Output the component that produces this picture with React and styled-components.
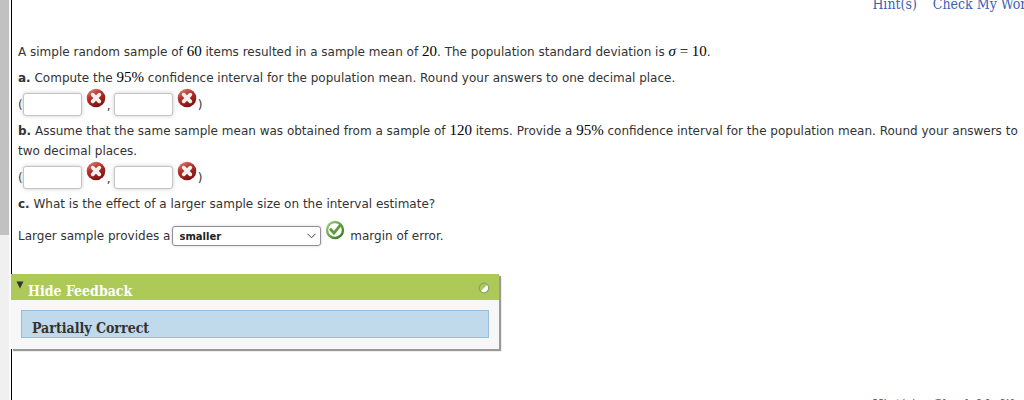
import React, { useState } from 'react'
import styled, { createGlobalStyle } from 'styled-components'

const GlobalStyle = createGlobalStyle`
  * {
    box-sizing: border-box;
  }

  body {
    margin: 0;
    overflow: hidden;
    background-color: #fff;
    color: #333;
    font-family: 'DejaVu Sans', Verdana, sans-serif;
    font-size: 12px;
    line-height: 20px;
  }
`;

const Page = styled.div`
  display: flex;
  height: 100vh;
  overflow: hidden;
`;

const Track = styled.div`
  flex: none;
  width: 11px;
  background-color: #f0f0f0;
  border-right: 2px solid #fafafa;
`;

const Thumb = styled.div`
  height: 235px;
  background-color: #c1c1c1;
`;

const Content = styled.main`
  flex: 1;
  min-width: 0;
  border-left: 1px solid #000;
`;

const Links = styled.nav`
  display: flex;
  justify-content: flex-end;
  gap: 16px;
  height: 24px;
  margin-top: ${props => (props.$top ? '-8px' : '44px')};
  margin-right: -10px;
`;

const Link = styled.a`
  color: #3a62b3;
  font-family: 'DejaVu Serif Condensed', 'DejaVu Serif', Georgia, serif;
  font-size: 14px;
  line-height: 24px;
  text-decoration: none;
  white-space: nowrap;
`;

const Question = styled.section`
  padding: 26px 0 28px 6px;
`;

const Text = styled.p`
  margin: 0 0 ${props => props.$gap || 0}px;
`;

const Num = styled.span`
  color: #000;
  font-family: 'Liberation Serif', serif;
  font-size: 15px;
  line-height: 1;
`;

const Answers = styled.div`
  display: flex;
  align-items: center;
  height: 33px;
`;

const Box = styled.input`
  width: 59px;
  height: 23px;
  padding: 2px 4px;
  border: 1px solid #c4c4c4;
  border-radius: 3px;
  box-shadow: 0 0 4px #ccc;
  font: inherit;
`;

const Mark = styled.svg`
  flex: none;
  width: 20px;
  height: 20px;
  margin: 0 1px 13px 4px;
`;

const Separator = styled.span`
  width: 7px;
  padding-top: 2px;
`;

const Choice = styled.div`
  display: flex;
  align-items: center;
  height: 20px;
`;

const Select = styled.select`
  width: 149px;
  height: 20px;
  margin-left: 2px;
  padding: 0 24px 0 6px;
  appearance: none;
  border: 1px solid #8f8f9d;
  border-radius: 3px;
  background-color: #fff;
  box-shadow: 0 0 3px #ccc;
  color: #222;
  font-family: inherit;
  font-size: 10px;
  font-weight: bold;
`;

const Chevron = styled.svg`
  flex: none;
  width: 9px;
  height: 6px;
  margin: 0 5px 0 -14px;
  pointer-events: none;
`;

const Feedback = styled.section`
  width: 488px;
  max-width: 100%;
  margin-left: -1px;
  background-color: #f7f7f7;
  box-shadow: 2px 2px 1px #999;
`;

const FeedbackHeader = styled.button`
  display: flex;
  align-items: center;
  width: 100%;
  height: 26px;
  padding: 0 9px 0 5px;
  border: 0;
  background-color: #adc957;
  color: #fff;
  font-family: 'DejaVu Serif Condensed', 'DejaVu Serif', Georgia, serif;
  font-size: 14px;
  font-weight: bold;
  text-align: left;
`;

const Arrow = styled.svg`
  width: 8px;
  height: 8px;
  margin: 0 4px 4px 0;
`;

const Title = styled.span`
  flex: 1;
  padding-top: 7px;
`;

const Partial = styled.svg`
  width: 12px;
  height: 12px;
  margin-top: 2px;
`;

const FeedbackBody = styled.div`
  padding: 10px 10px 11px;
`;

const Result = styled.div`
  height: 28px;
  padding: 6px 10px 0;
  border: 1px solid #94c0dc;
  background-color: #c0daec;
  font-family: 'DejaVu Serif Condensed', 'DejaVu Serif', Georgia, serif;
  font-size: 14px;
  font-weight: bold;
  line-height: 22px;
`;

const Wrong = () => (
  <Mark viewBox="0 0 20 20" role="img" aria-label="Incorrect">
    <defs>
      <linearGradient id="red" x1="0.2" y1="0" x2="0.7" y2="1">
        <stop offset="0" stopColor="#d98378" />
        <stop offset="0.4" stopColor="#b5302a" />
        <stop offset="1" stopColor="#780f0c" />
      </linearGradient>
    </defs>
    <circle cx="10" cy="10" r="9.3" fill="url(#red)" />
    <path d="M6.7 6.7l6.6 6.6M13.3 6.7l-6.6 6.6" stroke="#f4f0ee" strokeWidth="3.8" strokeLinecap="round" />
  </Mark>
)

const Right = () => (
  <Mark viewBox="0 0 20 20" role="img" aria-label="Correct">
    <defs>
      <linearGradient id="green" x1="0" y1="0" x2="1" y2="1">
        <stop offset="0" stopColor="#a3ce86" />
        <stop offset="1" stopColor="#2f7518" />
      </linearGradient>
    </defs>
    <circle cx="10" cy="10" r="8" fill="#fff" stroke="url(#green)" strokeWidth="2.4" />
    <path d="M5 8.8l4 4.4L15.8 4.6" fill="none" stroke="#5a9f36" strokeWidth="2.8" />
  </Mark>
)

const Interval = ({ label }) => (
  <Answers>
    (
    <Box aria-label={`${label} lower limit`} />
    <Wrong />
    <Separator>,</Separator>
    <Box aria-label={`${label} upper limit`} />
    <Wrong />
    )
  </Answers>
)

const HelpLinks = ({ top }) => (
  <Links $top={top}>
    <Link href="#hints">Hint(s)</Link>
    <Link href="#check">Check My Work</Link>
  </Links>
)

export default function App() {
  const [open, setOpen] = useState(true)
  const [size, setSize] = useState('smaller')

  return (
    <Page>
      <GlobalStyle />
      <Track>
        <Thumb />
      </Track>
      <Content>
        <HelpLinks top />
        <Question>
          <Text $gap={6}>
            A simple random sample of <Num>60</Num> items resulted in a sample mean of <Num>20</Num>. The population standard deviation is <Num><i>σ</i> = 10</Num>.
          </Text>
          <Text>
            <b>a.</b> Compute the <Num>95%</Num> confidence interval for the population mean. Round your answers to one decimal place.
          </Text>
          <Interval label="Part a" />
          <Text>
            <b>b.</b> Assume that the same sample mean was obtained from a sample of <Num>120</Num> items. Provide a <Num>95%</Num> confidence interval for the population mean. Round your answers to two decimal places.
          </Text>
          <Interval label="Part b" />
          <Text $gap={12}>
            <b>c.</b> What is the effect of a larger sample size on the interval estimate?
          </Text>
          <Choice>
            <label htmlFor="margin">Larger sample provides a</label>
            <Select id="margin" value={size} onChange={e => setSize(e.target.value)}>
              <option>smaller</option>
              <option>larger</option>
            </Select>
            <Chevron viewBox="0 0 9 6">
              <path d="M0.5 0.8l4 4 4-4" fill="none" stroke="#444" />
            </Chevron>
            <Right />
            <span>&nbsp;margin of error.</span>
          </Choice>
        </Question>
        <Feedback>
          <FeedbackHeader aria-expanded={open} onClick={() => setOpen(!open)}>
            <Arrow viewBox="0 0 8 8">
              <path d="M0.5 0.5h7L4 7.5z" fill="#333" />
            </Arrow>
            <Title>Hide Feedback</Title>
            <Partial viewBox="0 0 12 12">
              <path d="M9.5 2.5A5 5 0 0 1 2.5 9.5z" fill="#fff" />
              <circle cx="6" cy="6" r="4.8" fill="none" stroke="#939c79" strokeWidth="1.3" />
            </Partial>
          </FeedbackHeader>
          {open && (
            <FeedbackBody>
              <Result>Partially Correct</Result>
            </FeedbackBody>
          )}
        </Feedback>
        <HelpLinks />
      </Content>
    </Page>
  )
}
